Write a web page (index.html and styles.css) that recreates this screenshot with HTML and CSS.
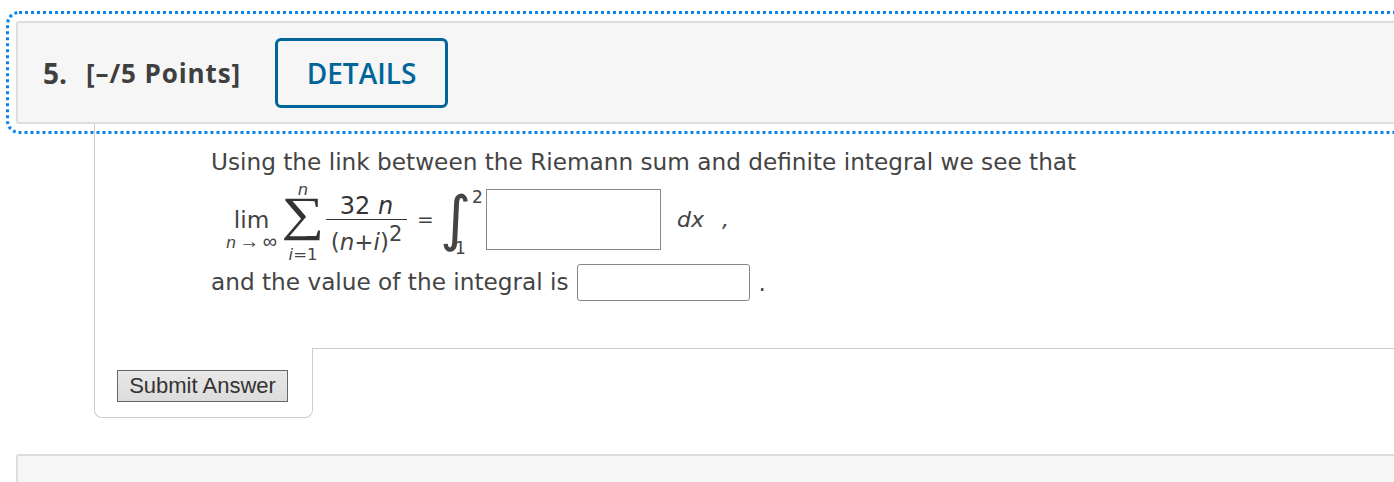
FILE: index.html
```html
<!DOCTYPE html>
<html lang="en">
<head>
    <meta charset="UTF-8">
    <title>Question 5</title>
    <link rel="stylesheet" href="styles.css">
</head>
<body>
    <div class="question-head">
        <span class="question-num">5.</span>
        <span class="question-points">[&#8211;/5 Points]</span>
        <button class="details-btn">DETAILS</button>
    </div>

    <div class="question-body">
        <div class="question-text">
            <p class="line-first">Using the link between the Riemann sum and definite integral we see that</p>
            <div class="math-row">
                <div class="lim">
                    <span>lim</span>
                    <span class="lim-sub"><i>n</i> <span class="lim-sym">&#8594; &#8734;</span></span>
                </div>
                <div class="sum">
                    <span class="sum-top"><i>n</i></span>
                    <span class="sum-sign">&#8721;</span>
                    <span class="sum-bottom"><i>i</i>=1</span>
                </div>
                <div class="frac">
                    <span class="frac-top">32 <i>n</i></span>
                    <span class="frac-bottom">(<i>n</i>+<i>i</i>)<sup>2</sup></span>
                </div>
                <span class="equals">=</span>
                <div class="integral">
                    <span class="integral-sign">&#8747;</span>
                    <span class="integral-top">2</span>
                    <span class="integral-bottom">1</span>
                </div>
                <input class="answer answer-big" type="text">
                <span class="dx"><i>dx</i></span>
                <span class="comma"><i>,</i></span>
            </div>
            <div class="line-last">
                <span class="line-label">and the value of the integral is</span>
                <input class="answer answer-small" type="text">
                <span class="period">.</span>
            </div>
        </div>

        <div class="question-foot">
            <div class="submit-cell">
                <button class="submit-btn">Submit Answer</button>
            </div>
            <div class="foot-rest"></div>
        </div>
    </div>

    <div class="next-question"></div>
</body>
</html>
```

FILE: styles.css
```css
html, body {
    height: 482px;
    overflow: hidden;
}
body {
    margin: 0;
    font-family: "DejaVu Sans", Verdana, sans-serif;
    color: #444;
    background-color: white;
}
.question-head {
    display: flex;
    align-items: center;
    box-sizing: border-box;
    height: 103px;
    margin: 21px -20px 0 16px;
    padding-left: 25px;
    background-color: #f6f6f6;
    border: 2px solid #ddd;
    border-radius: 3px;
    outline: 3px dotted #0a84ec;
    outline-offset: 7px;
    font-family: "Open Sans", sans-serif;
    font-weight: 700;
    font-size: 28px;
    color: #3f3f3f;
}
.question-points {
    margin-left: 19px;
    font-size: 26px;
    letter-spacing: 0.9px;
}
.details-btn {
    box-sizing: border-box;
    width: 173px;
    height: 70px;
    margin-left: 34px;
    background: transparent;
    border: 3px solid #006598;
    border-radius: 6px;
    font-family: "Open Sans", sans-serif;
    font-weight: 600;
    font-size: 28px;
    color: #006598;
}
.question-body {
    margin-left: 94px;
}
.question-text {
    box-sizing: border-box;
    height: 224px;
    padding: 24px 0 0 116px;
    border-left: 1px solid #ccc;
    font-size: 23.2px;
}
.line-first {
    margin: 0;
    line-height: 28px;
}
.math-row {
    display: flex;
    align-items: center;
    height: 84px;
    margin-top: 1px;
}
.lim {
    display: flex;
    flex: none;
    flex-direction: column;
    align-items: center;
    width: 51px;
    margin-left: 15px;
    margin-top: 22px;
    line-height: 26px;
}
.lim-sub {
    font-size: 16px;
    line-height: 20px;
    white-space: nowrap;
    word-spacing: -2px;
}
.lim-sym {
    font-family: "Liberation Sans", sans-serif;
    font-size: 20px;
    line-height: 16px;
}
.sum {
    position: relative;
    flex: none;
    width: 40px;
    margin-left: 6px;
    text-align: center;
}
.sum-sign {
    display: block;
    font-family: "Liberation Serif", serif;
    font-size: 48px;
    line-height: 40px;
    color: #333;
    transform: translateY(-5px) scaleX(1.25);
}
.sum-top, .sum-bottom {
    position: absolute;
    left: 0;
    right: 0;
    font-size: 16.5px;
    line-height: 18px;
}
.sum-top {
    top: -18px;
}
.sum-bottom {
    bottom: -25px;
}
.frac {
    display: flex;
    flex: none;
    flex-direction: column;
    align-items: center;
    align-self: flex-start;
    width: 81px;
    margin-left: 3px;
    margin-top: 13px;
}
.frac-top {
    width: 100%;
    padding-top: 3px;
    text-align: center;
    font-size: 24px;
    line-height: 26px;
    border-bottom: 1px solid #333;
    color: #333;
}
.frac-bottom {
    font-size: 23px;
    line-height: 44px;
    white-space: nowrap;
}
.frac-bottom sup {
    font-size: 21px;
    line-height: 0;
}
.equals {
    flex: none;
    width: 13px;
    margin-left: 10px;
    font-size: 20px;
}
.integral {
    position: relative;
    flex: none;
    width: 44px;
    height: 60px;
    margin-left: 12px;
}
.integral-sign {
    position: absolute;
    left: -2px;
    top: -10px;
    font-family: "DejaVu Sans", sans-serif;
    font-size: 60px;
    line-height: 78px;
    color: #444;
}
.integral-top, .integral-bottom {
    position: absolute;
    font-size: 17px;
    line-height: 18px;
}
.integral-top {
    left: 30px;
    top: -1px;
}
.integral-bottom {
    left: 13px;
    bottom: -8px;
}
.answer {
    box-sizing: border-box;
    flex: none;
    margin: 0;
    padding: 0;
    background: white;
    border: 1px solid #888;
    outline: none;
}
.answer-big {
    width: 175px;
    height: 61px;
    border-radius: 0;
}
.dx {
    margin-left: 16px;
    font-size: 22px;
}
.comma {
    margin-left: 18px;
    font-size: 22px;
}
.line-last {
    display: flex;
    align-items: center;
    height: 37px;
    margin-top: 3px;
}
.line-label {
    margin-bottom: 2px;
}
.answer-small {
    width: 173px;
    height: 37px;
    margin-left: 8px;
    border-radius: 3px;
}
.period {
    margin-left: 9px;
}
.question-foot {
    display: flex;
    height: 70px;
}
.submit-cell {
    box-sizing: border-box;
    width: 219px;
    padding: 22px 0 0 22px;
    border: 1px solid #ccc;
    border-top: none;
    border-radius: 0 0 8px 8px;
}
.foot-rest {
    flex: 1;
    border-top: 1px solid #ccc;
}
.submit-btn {
    display: block;
    box-sizing: border-box;
    width: 171px;
    height: 32px;
    padding: 0;
    background: linear-gradient(#e8e8e8, #dcdcdc);
    border: 1px solid #666;
    font-family: "Liberation Sans", Arial, sans-serif;
    font-size: 22px;
    color: #333;
}
.next-question {
    box-sizing: border-box;
    height: 28px;
    margin: 36px -20px 0 16px;
    background-color: #f6f6f6;
    border: 2px solid #ddd;
    border-bottom: none;
    border-radius: 3px 3px 0 0;
}
```
